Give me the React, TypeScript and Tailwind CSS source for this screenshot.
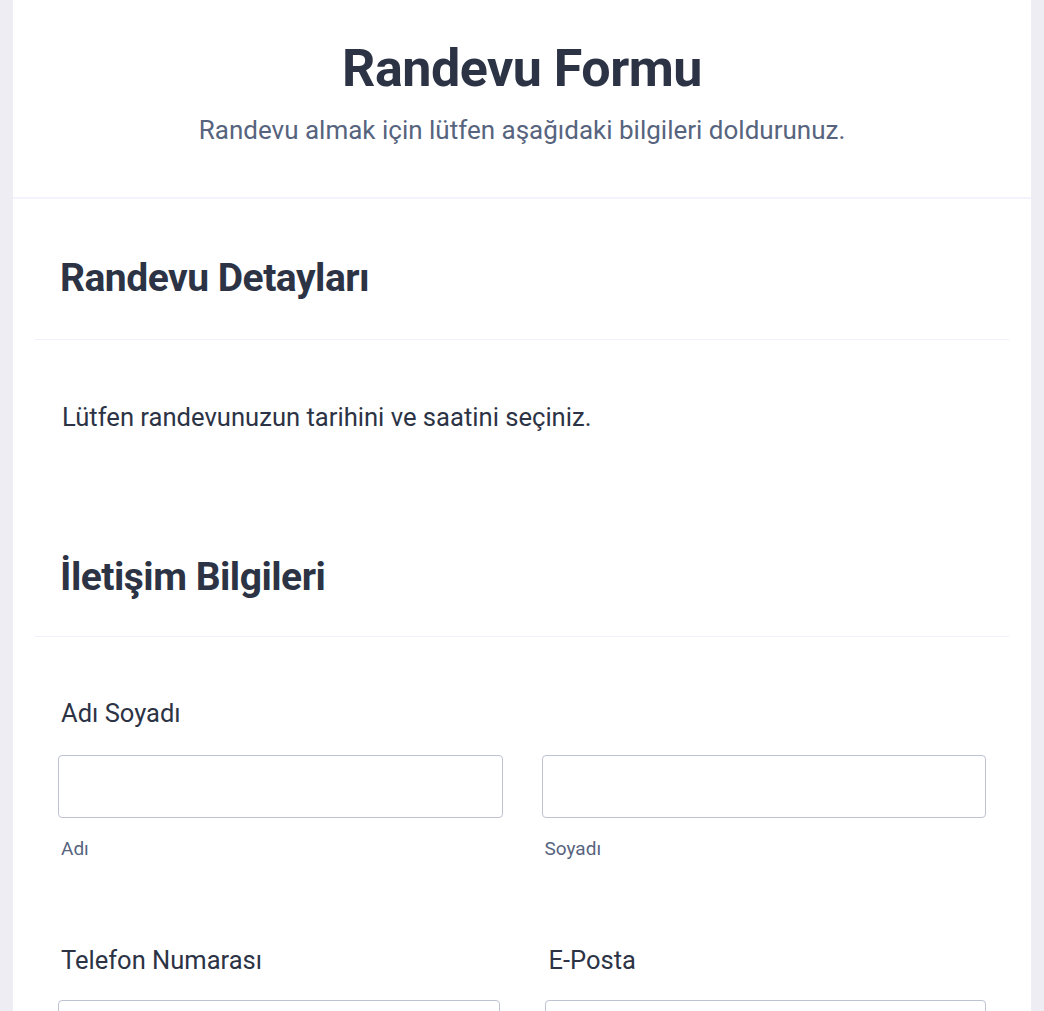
import React from "react";

const font = { fontFamily: "Roboto, 'Noto Sans', sans-serif" };

function Field({ sub }: { sub?: string }) {
  return (
    <div className="flex flex-col">
      <input className="h-[63px] w-full rounded-[4px] border border-[#bfc2d1] bg-white outline-none" />
      {sub && <div className="mt-[20px] pl-[3px] text-[19px] leading-[22px] text-[#57647e]">{sub}</div>}
    </div>
  );
}

export default function App() {
  return (
    <div className="min-h-[1011px] w-full bg-[#ededf3] text-[#2c3345]" style={font}>
      <div className="ml-[13px] w-[1018px] min-h-[1011px] bg-white">
        <div className="flex h-[199px] flex-col items-center border-b-2 border-[#f3f3fe] pt-[39px]">
          <h1 className="text-[52px] font-bold leading-[60px] tracking-[-0.5px] text-[#2c3345]">Randevu Formu</h1>
          <p className="mt-[15px] text-[26px] leading-[32px] text-[#57647e]">
            Randevu almak için lütfen aşağıdaki bilgileri doldurunuz.
          </p>
        </div>

        <div className="mx-[22px]">
          <div className="border-b border-[#f1f1fb] pb-[38px] pl-[25px] pt-[56px]">
            <h2 className="text-[39px] font-bold leading-[46px] tracking-[-0.5px]">Randevu Detayları</h2>
          </div>
          <p className="pl-[27px] pt-[62px] text-[25.6px] leading-[30px]">Lütfen randevunuzun tarihini ve saatini seçiniz.</p>

          <div className="border-b border-[#f1f1fb] pb-[36px] pl-[25px] pt-[122px]">
            <h2 className="text-[39px] font-bold leading-[46px] tracking-[-0.5px]">İletişim Bilgileri</h2>
          </div>

          <div className="px-[23px] pt-[61px]">
            <div className="pl-[3px] text-[25.5px] leading-[30px]">Adı Soyadı</div>
            <div className="mt-[27px] grid grid-cols-2 gap-x-[39px]">
              <Field sub="Adı" />
              <Field sub="Soyadı" />
            </div>

            <div className="mt-[85px] grid grid-cols-2 gap-x-[45px]">
              <div className="pl-[3px] text-[25.5px] leading-[30px]">Telefon Numarası</div>
              <div className="pl-[4px] text-[25.5px] leading-[30px]">E-Posta</div>
            </div>
            <div className="mt-[25px] grid grid-cols-2 gap-x-[45px]">
              <Field />
              <Field />
            </div>
          </div>
        </div>
      </div>
    </div>
  );
}
